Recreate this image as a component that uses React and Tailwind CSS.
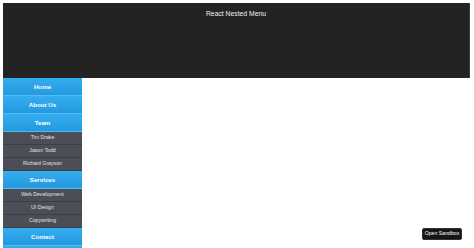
import React from "react";

const menu = [
  { label: "Home" },
  { label: "About Us" },
  { label: "Team", children: ["Tim Drake", "Jason Todd", "Richard Grayson"] },
  { label: "Services", children: ["Web Development", "UI Design", "Copywriting"] },
  { label: "Contact" },
  { label: "" },
];

function MenuItem({ item }) {
  return (
    <div>
      <div className="h-[18px] flex items-center justify-center bg-gradient-to-b from-[#34aef0] to-[#2499de] border-b border-[#52bcf2] text-white text-[6.2px] font-bold">
        {item.label}
      </div>
      {item.children &&
        item.children.map((c) => (
          <div
            key={c}
            className="h-[13px] flex items-center justify-center bg-[#4b4e56] border-b border-[#3c3e44] text-[#e2e2e2] text-[5.2px]"
          >
            {c}
          </div>
        ))}
    </div>
  );
}

export default function App() {
  return (
    <div className="relative h-[248px] overflow-hidden bg-white pt-[3px] pl-[3px] pr-[4px] font-['Liberation_Sans',Arial,sans-serif]">
      <header className="h-[75px] bg-[#232323] border-r border-[#3a3a3a] flex justify-center pt-[8px]">
        <h1 className="text-[6.8px] leading-none text-[#eeeeee]">React Nested Menu</h1>
      </header>
      <div className="flex">
        <nav className="w-[79px] flex flex-col">
          {menu.map((m, i) => (
            <MenuItem key={i} item={m} />
          ))}
        </nav>
        <main className="flex-1" />
      </div>
      <button className="absolute right-[12px] bottom-[8px] w-[40px] h-[12px] rounded-[2px] bg-[#151515] border border-[#333] text-white text-[5.2px] leading-none flex items-center justify-center">
        Open Sandbox
      </button>
    </div>
  );
}
